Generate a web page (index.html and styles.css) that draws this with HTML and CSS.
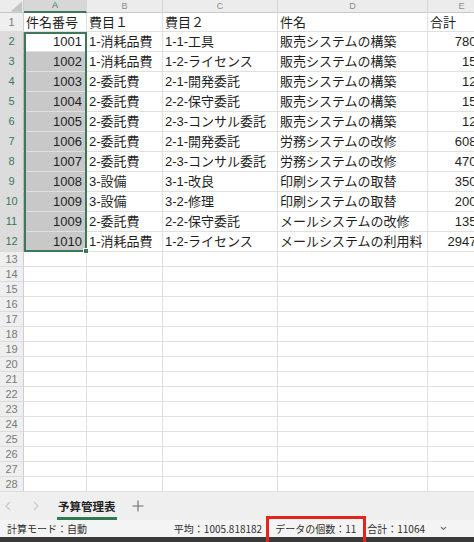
FILE: index.html
```html
<!DOCTYPE html>
<html lang="ja">
<head>
<meta charset="utf-8">
<title>予算管理表</title>
<link rel="stylesheet" href="styles.css">
</head>
<body>
<div class="app">
  <div class="sheet">
    <div class="cells">
      <div class="corner"><svg width="24" height="13" viewBox="0 0 24 13"><polygon points="11,12 23,12 23,1" fill="#c4c4c4"/></svg></div>
      <div class="ch sel">A</div><div class="ch">B</div><div class="ch">C</div><div class="ch">D</div><div class="ch">E</div>

      <div class="rh">1</div><div class="c">件名番号</div><div class="c">費目１</div><div class="c">費目２</div><div class="c">件名</div><div class="c">合計</div>
      <div class="rh sel">2</div><div class="c num">1001</div><div class="c">1-消耗品費</div><div class="c">1-1-工具</div><div class="c">販売システムの構築</div><div class="c num">78000</div>
      <div class="rh sel">3</div><div class="c num fill">1002</div><div class="c">1-消耗品費</div><div class="c">1-2-ライセンス</div><div class="c">販売システムの構築</div><div class="c num">1500</div>
      <div class="rh sel">4</div><div class="c num fill">1003</div><div class="c">2-委託費</div><div class="c">2-1-開発委託</div><div class="c">販売システムの構築</div><div class="c num">1200</div>
      <div class="rh sel">5</div><div class="c num fill">1004</div><div class="c">2-委託費</div><div class="c">2-2-保守委託</div><div class="c">販売システムの構築</div><div class="c num">1500</div>
      <div class="rh sel">6</div><div class="c num fill">1005</div><div class="c">2-委託費</div><div class="c">2-3-コンサル委託</div><div class="c">販売システムの構築</div><div class="c num">1200</div>
      <div class="rh sel">7</div><div class="c num fill">1006</div><div class="c">2-委託費</div><div class="c">2-1-開発委託</div><div class="c">労務システムの改修</div><div class="c num">60800</div>
      <div class="rh sel">8</div><div class="c num fill">1007</div><div class="c">2-委託費</div><div class="c">2-3-コンサル委託</div><div class="c">労務システムの改修</div><div class="c num">47000</div>
      <div class="rh sel">9</div><div class="c num fill">1008</div><div class="c">3-設備</div><div class="c">3-1-改良</div><div class="c">印刷システムの取替</div><div class="c num">35000</div>
      <div class="rh sel">10</div><div class="c num fill">1009</div><div class="c">3-設備</div><div class="c">3-2-修理</div><div class="c">印刷システムの取替</div><div class="c num">20000</div>
      <div class="rh sel">11</div><div class="c num fill">1009</div><div class="c">2-委託費</div><div class="c">2-2-保守委託</div><div class="c">メールシステムの改修</div><div class="c num">13500</div>
      <div class="rh sel">12</div><div class="c num fill">1010</div><div class="c">1-消耗品費</div><div class="c">1-2-ライセンス</div><div class="c">メールシステムの利用料</div><div class="c num">294700</div>

      <div class="rh">13</div><div class="c"></div><div class="c"></div><div class="c"></div><div class="c"></div><div class="c"></div>
      <div class="rh">14</div><div class="c"></div><div class="c"></div><div class="c"></div><div class="c"></div><div class="c"></div>
      <div class="rh">15</div><div class="c"></div><div class="c"></div><div class="c"></div><div class="c"></div><div class="c"></div>
      <div class="rh">16</div><div class="c"></div><div class="c"></div><div class="c"></div><div class="c"></div><div class="c"></div>
      <div class="rh">17</div><div class="c"></div><div class="c"></div><div class="c"></div><div class="c"></div><div class="c"></div>
      <div class="rh">18</div><div class="c"></div><div class="c"></div><div class="c"></div><div class="c"></div><div class="c"></div>
      <div class="rh">19</div><div class="c"></div><div class="c"></div><div class="c"></div><div class="c"></div><div class="c"></div>
      <div class="rh">20</div><div class="c"></div><div class="c"></div><div class="c"></div><div class="c"></div><div class="c"></div>
      <div class="rh">21</div><div class="c"></div><div class="c"></div><div class="c"></div><div class="c"></div><div class="c"></div>
      <div class="rh">22</div><div class="c"></div><div class="c"></div><div class="c"></div><div class="c"></div><div class="c"></div>
      <div class="rh">23</div><div class="c"></div><div class="c"></div><div class="c"></div><div class="c"></div><div class="c"></div>
      <div class="rh">24</div><div class="c"></div><div class="c"></div><div class="c"></div><div class="c"></div><div class="c"></div>
      <div class="rh">25</div><div class="c"></div><div class="c"></div><div class="c"></div><div class="c"></div><div class="c"></div>
      <div class="rh">26</div><div class="c"></div><div class="c"></div><div class="c"></div><div class="c"></div><div class="c"></div>
      <div class="rh">27</div><div class="c"></div><div class="c"></div><div class="c"></div><div class="c"></div><div class="c"></div>
      <div class="rh">28</div><div class="c"></div><div class="c"></div><div class="c"></div><div class="c"></div><div class="c"></div>
    </div>
    <div class="overlay">
      <div class="selection"><span class="handle"></span></div>
    </div>
  </div>

  <div class="tabs">
    <svg class="chev" width="6" height="10" viewBox="0 0 6 10"><polyline points="5,1 1,5 5,9" fill="none" stroke="#c9c9c9" stroke-width="1.2"/></svg>
    <svg class="chev next" width="6" height="10" viewBox="0 0 6 10"><polyline points="1,1 5,5 1,9" fill="none" stroke="#c9c9c9" stroke-width="1.2"/></svg>
    <div class="tab">予算管理表</div>
    <svg class="plus" width="12" height="12" viewBox="0 0 12 12"><path d="M6 0.5V11.5M0.5 6H11.5" stroke="#6a6a6a" stroke-width="1.1"/></svg>
  </div>

  <div class="status">
    <span class="mode">計算モード：自動</span>
    <span class="avg">平均：1005.818182</span>
    <span class="count">データの個数：11</span>
    <span class="sum">合計：11064</span>
    <svg class="caret" width="7" height="5" viewBox="0 0 7 5"><polyline points="1,1 3.5,3.5 6,1" fill="none" stroke="#777" stroke-width="1.1"/></svg>
  </div>
  <div class="dock"></div>
</div>
</body>
</html>
```

FILE: styles.css
```css
* { box-sizing: border-box; }

body {
  margin: 0;
  width: 474px;
  height: 542px;
  overflow: hidden;
  background: #ffffff;
  font-family: "Liberation Sans", "Noto Sans CJK JP", sans-serif;
}

.app {
  width: 474px;
  height: 542px;
  overflow: hidden;
  display: flex;
  flex-direction: column;
}

.sheet {
  flex: none;
  width: 496px;
  height: 492px;
  display: grid;
  grid-template-columns: 1fr;
  grid-template-rows: 1fr;
}

.cells,
.overlay {
  grid-area: 1 / 1;
  display: grid;
  grid-template-columns: 24px 63px 76px 115px 150px 68px;
  grid-template-rows: 13px 19px repeat(11, 20px) repeat(16, 15px);
}

.overlay {
  pointer-events: none;
  z-index: 2;
}

.corner {
  background: #ececec;
  border-right: 1px solid #cdcdcd;
  border-bottom: 1px solid #c8c8c8;
  display: flex;
}

.ch {
  background: #ececec;
  border-right: 1px solid #d6d6d6;
  border-bottom: 1px solid #c8c8c8;
  font-size: 9px;
  color: #8c8c8c;
  display: flex;
  align-items: center;
  justify-content: center;
  line-height: 1;
}

.ch.sel {
  background: #d7d7d7;
  color: #3d7858;
  border-bottom: 2px solid #3d7858;
}

.rh {
  background: #efefef;
  border-right: 1px solid #cfcfcf;
  border-bottom: 1px solid #dcdcdc;
  font-size: 11px;
  color: #7a7a7a;
  display: flex;
  align-items: center;
  justify-content: center;
  line-height: 1;
}

.rh.sel {
  background: #dcdcdc;
  color: #3d7858;
  border-right-color: #b8b8b8;
}

.c {
  border-right: 1px solid #e0e0e0;
  border-bottom: 1px solid #e0e0e0;
  font-size: 13px;
  color: #1e1e1e;
  display: flex;
  align-items: center;
  padding: 0 2px;
  white-space: nowrap;
  overflow: hidden;
  line-height: 1;
}

.c.num {
  justify-content: flex-end;
  padding-right: 4px;
}

.c.fill {
  background: #c8c8c8;
}

.selection {
  grid-column: 2;
  grid-row: 3 / 14;
  border: 2px solid #3d7858;
  position: relative;
}

.handle {
  position: absolute;
  right: -4px;
  bottom: -4px;
  width: 6px;
  height: 6px;
  background: #3d7858;
  border: 1px solid #ffffff;
}

.tabs {
  flex: none;
  height: 28px;
  background: #efefef;
  display: flex;
  align-items: center;
  padding-left: 5px;
}

.chev.next {
  margin-left: 22px;
}

.tab {
  align-self: stretch;
  margin-left: 18px;
  display: flex;
  align-items: center;
  padding: 3px 1px 0;
  border-bottom: 3px solid #2f7a50;
  font-family: "Noto Sans CJK JP", sans-serif;
  font-size: 11.5px;
  font-weight: 700;
  color: #222222;
}

.plus {
  margin-left: 15px;
}

.status {
  flex: none;
  height: 17px;
  background: #f4f4f4;
  display: flex;
  align-items: center;
  padding-left: 7px;
  font-family: "Noto Sans CJK JP", sans-serif;
  font-size: 10px;
  color: #2e2e2e;
  line-height: 17px;
  white-space: nowrap;
}

.avg {
  margin-left: auto;
}

.count {
  position: relative;
  margin-left: 13px;
}

.count::after {
  content: "";
  position: absolute;
  left: -9px;
  right: -10px;
  top: -4px;
  bottom: -9px;
  border: 3px solid #e3261d;
}

.sum {
  margin-left: 11px;
}

.caret {
  margin-left: 15px;
  margin-right: 27px;
}

.dock {
  flex: none;
  height: 5px;
  background: #3a3a3a;
}
```
